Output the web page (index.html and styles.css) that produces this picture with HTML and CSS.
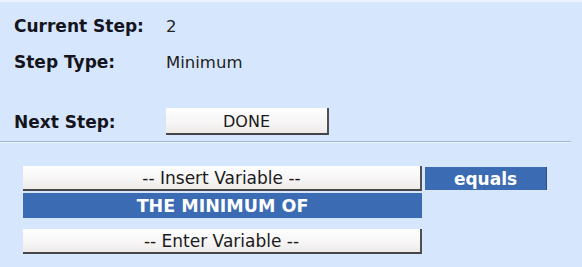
FILE: index.html
```html
<!DOCTYPE html>
<html>
<head>
<meta charset="utf-8">
<link rel="stylesheet" href="styles.css">
</head>
<body>
<div class="panel">
  <div class="info">
    <div class="row r1"><span class="label">Current Step:</span><span class="val">2</span></div>
    <div class="row r2"><span class="label">Step Type:</span><span class="val">Minimum</span></div>
    <div class="row r3"><span class="label">Next Step:</span><div class="btn done">DONE</div></div>
  </div>
  <div class="sep"></div>
  <div class="builder">
    <div class="col">
      <div class="btn wide">-- Insert Variable --</div>
      <div class="bar">THE MINIMUM OF</div>
      <div class="btn wide enter">-- Enter Variable --</div>
    </div>
    <div class="equals">equals</div>
  </div>
</div>
</body>
</html>
```
FILE: styles.css
```css
html, body {
  margin: 0;
  padding: 0;
  background: #d6e6fc;
}
.panel {
  width: 582px;
  height: 267px;
  box-sizing: border-box;
  border-top: 2px solid #eef4fe;
  font-family: "DejaVu Sans", Verdana, sans-serif;
  font-size: 16.5px;
  color: #1c1c24;
}
.info {
  padding: 12px 0 0 14px;
  display: flex;
  flex-direction: column;
}
.row {
  display: flex;
  align-items: center;
  height: 24px;
}
.r2 { margin-top: 12px; }
.r3 { margin-top: 34px; height: 27px; }
.label {
  width: 152px;
  font-weight: bold;
  font-size: 17px;
  color: #14141c;
}
.val { color: #222; }
.btn {
  box-sizing: border-box;
  background: linear-gradient(#ffffff, #f6f4f4 60%, #eeeaea);
  border-right: 2px solid #505050;
  border-bottom: 2px solid #464646;
  display: flex;
  align-items: center;
  justify-content: center;
  color: #1a1a1a;
}
.done {
  width: 163px;
  height: 27px;
  padding-top: 1px;
  font-size: 16px;
}
.sep {
  margin-top: 6px;
  width: 571px;
  border-top: 1px solid #a2b6d2;
  border-bottom: 1px solid #eaf2fd;
}
.builder {
  display: flex;
  align-items: flex-start;
  padding: 23px 0 0 23px;
}
.col {
  display: flex;
  flex-direction: column;
  width: 399px;
}
.wide {
  height: 25px;
  font-size: 17px;
}
.bar {
  margin-top: 2px;
  height: 25px;
  background: #3b6cb3;
  color: #fff;
  font-weight: bold;
  font-size: 17.5px;
  display: flex;
  align-items: center;
  justify-content: center;
}
.enter { margin-top: 11px; }
.equals {
  margin: 1px 0 0 3px;
  width: 122px;
  height: 23px;
  box-sizing: border-box;
  background: #3b6cb3;
  border-right: 1px solid #2a4f86;
  color: #fff;
  font-weight: bold;
  font-size: 17px;
  display: flex;
  align-items: center;
  justify-content: center;
}
```
